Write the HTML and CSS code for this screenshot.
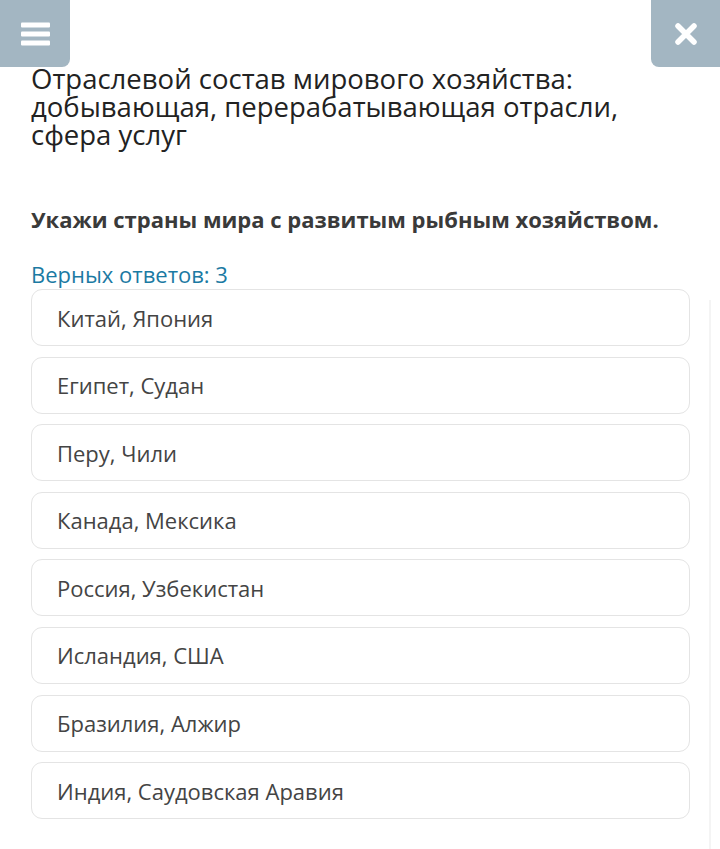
FILE: index.html
```html
<!DOCTYPE html>
<html lang="ru">
<head>
    <meta charset="UTF-8">
    <meta name="viewport" content="width=device-width, initial-scale=1.0">
    <title>Тест</title>
    <link rel="stylesheet" href="styles.css">
</head>
<body>
    <button class="corner-btn menu-btn" aria-label="Меню">
        <svg width="29" height="24" viewBox="0 0 29 24">
            <rect x="0" y="0.5" width="29" height="5" rx="1" fill="#fff"/>
            <rect x="0" y="9.5" width="29" height="5" rx="1" fill="#fff"/>
            <rect x="0" y="18.5" width="29" height="5" rx="1" fill="#fff"/>
        </svg>
    </button>
    <button class="corner-btn close-btn" aria-label="Закрыть">
        <svg width="24" height="24" viewBox="0 0 24 24">
            <path d="M4 4 L20 20 M20 4 L4 20" stroke="#fff" stroke-width="5.5" stroke-linecap="round"/>
        </svg>
    </button>

    <div class="scroll-line"></div>

    <main class="quiz">
        <h1>Отраслевой состав мирового хозяйства: добывающая, перерабатывающая отрасли, сфера услуг</h1>

        <p class="question">Укажи страны мира с развитым рыбным хозяйством.</p>

        <div class="answers-count">Верных ответов: 3</div>

        <ul class="options">
            <li class="option">Китай, Япония</li>
            <li class="option">Египет, Судан</li>
            <li class="option">Перу, Чили</li>
            <li class="option">Канада, Мексика</li>
            <li class="option">Россия, Узбекистан</li>
            <li class="option">Исландия, США</li>
            <li class="option">Бразилия, Алжир</li>
            <li class="option">Индия, Саудовская Аравия</li>
        </ul>
    </main>
</body>
</html>
```

FILE: styles.css
```css
:root {
    --btn: #a3b6c2;
    --text: #333;
    --option-text: #444;
    --accent: #1b7aa3;
    --border: #e4e4e4;
}

body {
    margin: 0;
    font-family: 'Open Sans', 'Noto Sans', Arial, sans-serif;
    background: #fff;
    color: var(--text);
}

.corner-btn {
    position: absolute;
    top: 0;
    width: 70px;
    height: 67px;
    border: none;
    background: var(--btn);
    display: flex;
    align-items: center;
    justify-content: center;
    padding: 0;
}

.menu-btn {
    left: 0;
    border-radius: 0 0 8px 0;
}

.close-btn {
    right: 0;
    width: 69px;
    border-radius: 0 0 0 8px;
}

.scroll-line {
    position: absolute;
    top: 300px;
    right: 9px;
    width: 2px;
    height: 549px;
    background: #f4f4f4;
}

.quiz {
    padding: 65px 30px 20px 31px;
}

h1 {
    margin: 0;
    font-size: 27.5px;
    font-weight: 400;
    line-height: 28px;
    color: #222;
}

.question {
    margin: 55px 0 0;
    font-size: 22px;
    font-weight: 700;
    line-height: 30px;
    color: #3a3a3a;
}

.answers-count {
    margin-top: 25px;
    font-size: 22px;
    line-height: 30px;
    color: var(--accent);
}

.options {
    list-style: none;
    margin: 0;
    padding: 0;
    display: flex;
    flex-direction: column;
    gap: 10.6px;
}

.option {
    height: 57px;
    box-sizing: border-box;
    border: 1.5px solid var(--border);
    border-radius: 11px;
    padding: 0 25px;
    display: flex;
    align-items: center;
    font-size: 22px;
    color: var(--option-text);
}
```
